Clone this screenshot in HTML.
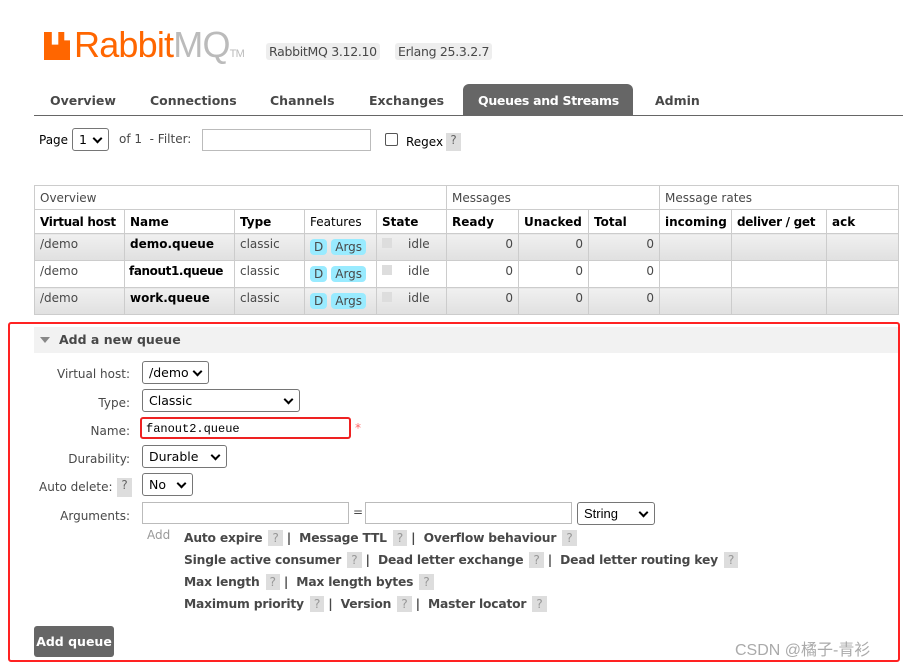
<!DOCTYPE html>
<html><head><meta charset="utf-8"><style>
*{box-sizing:border-box;margin:0;padding:0}
body{width:903px;height:664px;background:#fff;font-family:"DejaVu Sans",Verdana,sans-serif;font-size:12px;color:#484848;position:relative;overflow:hidden}
.a{position:absolute;white-space:nowrap}
.b{font-weight:bold}
.tab{position:absolute;top:93px;font-weight:bold;font-size:12.5px;color:#484848}
.sel{position:absolute;background:#fff;border:1px solid #767676;border-radius:3px;font-size:12.5px;color:#000;padding:3px 6px;height:23px}
.sel:after{content:"";position:absolute;right:7px;top:6px;width:5px;height:5px;border-right:2px solid #000;border-bottom:2px solid #000;transform:rotate(45deg)}
.inp{position:absolute;background:#fff;border:1px solid #bbb;height:22px}
.q{display:inline-block;background:#ddd;color:#999;font-weight:normal;padding:1px 4px;margin:0 4px 0 6px}
table{position:absolute;left:34px;top:185px;border-collapse:collapse;font-size:12px;table-layout:fixed;width:865px}
td,th{border:1px solid #ccc;padding:0 5px;text-align:left;white-space:nowrap;overflow:hidden}
th{font-weight:bold;color:#000;height:24px}
tr.h1 td{height:24px;color:#484848}
tr.r td{height:27px;vertical-align:top;padding-top:3px}
tr.g td{background:linear-gradient(#f0f0f0,#e0e0e0)}
.n{text-align:right}
.pill{display:inline-block;background:#99ebff;border-radius:4px;padding:1px 4px;margin-right:4px;margin-top:2px}
.lbl{position:absolute;font-size:12px;color:#484848;text-align:right;width:100px}
.lnk{position:absolute;font-weight:bold;font-size:12.3px;color:#484848;left:184px;letter-spacing:-0.2px}
</style></head><body>
<div class="a" style="left:44px;top:24px;font-size:36px;font-family:'Liberation Sans',sans-serif;letter-spacing:-0.8px"><span style="display:inline-block;width:26px;height:28px;background:#f60;vertical-align:-3px;margin-right:4px;clip-path:polygon(0 0,30% 0,30% 45%,55% 45%,55% 0,78% 0,78% 30%,100% 30%,100% 100%,0 100%)"></span><span style="color:#f60">Rabbit</span><span style="color:#bbb">MQ</span><span style="color:#bbb;font-size:11px">TM</span></div>
<div class="a" style="left:266px;top:43px;background:#eee;padding:1px 3px;font-size:12.5px;border-radius:3px;letter-spacing:-0.3px">RabbitMQ 3.12.10</div>
<div class="a" style="left:395px;top:43px;background:#eee;padding:1px 3px;font-size:12.5px;border-radius:3px;letter-spacing:-0.3px">Erlang 25.3.2.7</div>
<div class="tab" style="left:50px">Overview</div>
<div class="tab" style="left:150px">Connections</div>
<div class="tab" style="left:270px">Channels</div>
<div class="tab" style="left:369px">Exchanges</div>
<div class="a" style="left:463px;top:84px;width:170px;height:32px;background:#666;border-radius:6px 6px 0 0"></div>
<div class="tab" style="left:478px;color:#fff;letter-spacing:-0.3px">Queues and Streams</div>
<div class="tab" style="left:655px">Admin</div>
<div class="a" style="left:34px;top:115px;width:869px;height:1px;background:#666"></div>
<div class="a" style="left:39px;top:133px;font-size:12px;color:#000">Page</div>
<div class="sel" style="left:72px;top:128px;width:37px">1</div>
<div class="a" style="left:119px;top:132px;font-size:12px">of 1 &nbsp;- Filter:</div>
<div class="inp" style="left:202px;top:129px;width:169px"></div>
<div class="a" style="left:385px;top:133px;width:13px;height:13px;border:1px solid #555;border-radius:2px"></div>
<div class="a" style="left:406px;top:135px;font-size:12px;color:#000">Regex</div>
<div class="a" style="left:446px;top:133px;background:#ddd;width:15px;height:18px;text-align:center;color:#666">?</div>
<table>
<colgroup><col style="width:90px"><col style="width:110px"><col style="width:70px"><col style="width:72px"><col style="width:70px"><col style="width:72px"><col style="width:70px"><col style="width:71px"><col style="width:72px"><col style="width:95px"><col style="width:72px"></colgroup>
<tr class="h1"><td colspan="5">Overview</td><td colspan="3">Messages</td><td colspan="3">Message rates</td></tr>
<tr><th style="letter-spacing:-0.3px">Virtual host</th><th>Name</th><th>Type</th><th style="font-weight:normal">Features</th><th>State</th><th>Ready</th><th>Unacked</th><th>Total</th><th>incoming</th><th style="letter-spacing:-0.3px">deliver / get</th><th>ack</th></tr>
<tr class="r g"><td>/demo</td><td class="b" style="color:#000">demo.queue</td><td>classic</td><td><span class="pill">D</span><span class="pill">Args</span></td><td><span style="display:inline-block;width:10px;height:10px;background:#ddd;margin-right:16px"></span>idle</td><td class="n">0</td><td class="n">0</td><td class="n">0</td><td></td><td></td><td></td></tr>
<tr class="r"><td>/demo</td><td class="b" style="color:#000;letter-spacing:-0.4px;padding-left:4px">fanout1.queue</td><td>classic</td><td><span class="pill">D</span><span class="pill">Args</span></td><td><span style="display:inline-block;width:10px;height:10px;background:#ddd;margin-right:16px"></span>idle</td><td class="n">0</td><td class="n">0</td><td class="n">0</td><td></td><td></td><td></td></tr>
<tr class="r g"><td>/demo</td><td class="b" style="color:#000">work.queue</td><td>classic</td><td><span class="pill">D</span><span class="pill">Args</span></td><td><span style="display:inline-block;width:10px;height:10px;background:#ddd;margin-right:16px"></span>idle</td><td class="n">0</td><td class="n">0</td><td class="n">0</td><td></td><td></td><td></td></tr>
</table>
<div class="a" style="left:8px;top:322px;width:892px;height:340px;border:2px solid #f22;border-radius:3px"></div>
<div class="a" style="left:34px;top:327px;width:864px;height:26px;background:#f2f2f2"></div>
<div class="a" style="left:40px;top:337px;border-left:5px solid transparent;border-right:5px solid transparent;border-top:6px solid #888;width:0;height:0"></div>
<div class="a b" style="left:59px;top:332px;font-size:12.5px">Add a new queue</div>
<div class="lbl" style="left:30px;top:367px">Virtual host:</div>
<div class="sel" style="left:142px;top:361px;width:67px">/demo</div>
<div class="lbl" style="left:30px;top:396px">Type:</div>
<div class="sel" style="left:142px;top:389px;width:158px">Classic</div>
<div class="lbl" style="left:30px;top:424px">Name:</div>
<div class="a" style="left:140px;top:417px;width:211px;height:22px;border:2px solid #e22;border-radius:3px;font-family:'Liberation Mono',monospace;font-size:12px;color:#000;padding:3px 4px">fanout2.queue</div>
<div class="a" style="left:355px;top:421px;color:#f66">*</div>
<div class="lbl" style="left:30px;top:452px">Durability:</div>
<div class="sel" style="left:142px;top:445px;width:85px">Durable</div>
<div class="a" style="left:39px;top:480px;font-size:12px">Auto delete:</div>
<div class="a" style="left:117px;top:478px;background:#ddd;width:15px;height:19px;text-align:center;color:#666">?</div>
<div class="sel" style="left:142px;top:473px;width:51px">No</div>
<div class="lbl" style="left:30px;top:509px">Arguments:</div>
<div class="inp" style="left:142px;top:502px;width:207px"></div>
<div class="a" style="left:353px;top:505px">=</div>
<div class="inp" style="left:365px;top:502px;width:207px"></div>
<div class="sel" style="left:577px;top:502px;width:78px;font-family:'Liberation Sans',sans-serif;font-size:13px">String</div>
<div class="a" style="left:147px;top:528px;color:#999">Add</div>
<div class="lnk" style="top:530px">Auto expire<span class="q">?</span>| &nbsp;Message TTL<span class="q">?</span>| &nbsp;Overflow behaviour<span class="q">?</span></div>
<div class="lnk" style="top:552px">Single active consumer<span class="q">?</span>| &nbsp;Dead letter exchange<span class="q">?</span>| &nbsp;Dead letter routing key<span class="q">?</span></div>
<div class="lnk" style="top:574px">Max length<span class="q">?</span>| &nbsp;Max length bytes<span class="q">?</span></div>
<div class="lnk" style="top:596px">Maximum priority<span class="q">?</span>| &nbsp;Version<span class="q">?</span>| &nbsp;Master locator<span class="q">?</span></div>
<div class="a" style="left:34px;top:626px;width:80px;height:31px;background:#666;border-radius:3px;color:#fff;font-size:12.5px;text-align:center;line-height:31px;font-weight:bold">Add queue</div>
<div class="a" style="left:735px;top:636px;font-size:16px;color:#aaa;font-family:'Liberation Sans','Noto Sans CJK SC',sans-serif">CSDN @橘子-青衫</div>
</body></html>
